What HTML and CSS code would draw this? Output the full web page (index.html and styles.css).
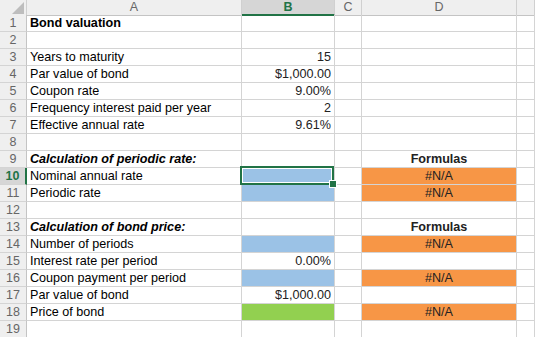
FILE: index.html
```html
<!DOCTYPE html>
<html>

	<head>
		<meta charset="UTF-8">
		<title>Bond valuation</title>
		<link rel="stylesheet" href="styles.css">
	</head>

	<body>
		<div class="sheet">
			<div class="row head">
				<div class="corner">
					<svg width="12" height="12" viewBox="0 0 12 12"><polygon points="12,0 12,12 0,12" fill="#bdbdbd"/></svg>
				</div>
				<div class="col">A</div>
				<div class="col sel">B</div>
				<div class="col">C</div>
				<div class="col">D</div>
				<div class="col"></div>
			</div>
			<div class="row">
				<div class="num">1</div>
				<div class="cell bold">Bond valuation</div>
				<div class="cell"></div><div class="cell"></div><div class="cell"></div><div class="cell"></div>
			</div>
			<div class="row">
				<div class="num">2</div>
				<div class="cell"></div><div class="cell"></div><div class="cell"></div><div class="cell"></div><div class="cell"></div>
			</div>
			<div class="row">
				<div class="num">3</div>
				<div class="cell">Years to maturity</div>
				<div class="cell val">15</div>
				<div class="cell"></div><div class="cell"></div><div class="cell"></div>
			</div>
			<div class="row">
				<div class="num">4</div>
				<div class="cell">Par value of bond</div>
				<div class="cell val">$1,000.00</div>
				<div class="cell"></div><div class="cell"></div><div class="cell"></div>
			</div>
			<div class="row">
				<div class="num">5</div>
				<div class="cell">Coupon rate</div>
				<div class="cell val">9.00%</div>
				<div class="cell"></div><div class="cell"></div><div class="cell"></div>
			</div>
			<div class="row">
				<div class="num">6</div>
				<div class="cell">Frequency interest paid per year</div>
				<div class="cell val">2</div>
				<div class="cell"></div><div class="cell"></div><div class="cell"></div>
			</div>
			<div class="row">
				<div class="num">7</div>
				<div class="cell">Effective annual rate</div>
				<div class="cell val">9.61%</div>
				<div class="cell"></div><div class="cell"></div><div class="cell"></div>
			</div>
			<div class="row">
				<div class="num">8</div>
				<div class="cell"></div><div class="cell"></div><div class="cell"></div><div class="cell"></div><div class="cell"></div>
			</div>
			<div class="row">
				<div class="num">9</div>
				<div class="cell bold ital">Calculation of periodic rate:</div>
				<div class="cell"></div>
				<div class="cell"></div>
				<div class="cell mid bold">Formulas</div>
				<div class="cell"></div>
			</div>
			<div class="row">
				<div class="num on">10</div>
				<div class="cell">Nominal annual rate</div>
				<div class="cell blue active"></div>
				<div class="cell"></div>
				<div class="cell mid orange">#N/A</div>
				<div class="cell"></div>
			</div>
			<div class="row">
				<div class="num">11</div>
				<div class="cell">Periodic rate</div>
				<div class="cell blue"></div>
				<div class="cell"></div>
				<div class="cell mid orange">#N/A</div>
				<div class="cell"></div>
			</div>
			<div class="row">
				<div class="num">12</div>
				<div class="cell"></div><div class="cell"></div><div class="cell"></div><div class="cell"></div><div class="cell"></div>
			</div>
			<div class="row">
				<div class="num">13</div>
				<div class="cell bold ital">Calculation of bond price:</div>
				<div class="cell"></div>
				<div class="cell"></div>
				<div class="cell mid bold">Formulas</div>
				<div class="cell"></div>
			</div>
			<div class="row">
				<div class="num">14</div>
				<div class="cell">Number of periods</div>
				<div class="cell blue"></div>
				<div class="cell"></div>
				<div class="cell mid orange">#N/A</div>
				<div class="cell"></div>
			</div>
			<div class="row">
				<div class="num">15</div>
				<div class="cell">Interest rate per period</div>
				<div class="cell val">0.00%</div>
				<div class="cell"></div><div class="cell"></div><div class="cell"></div>
			</div>
			<div class="row">
				<div class="num">16</div>
				<div class="cell">Coupon payment per period</div>
				<div class="cell blue"></div>
				<div class="cell"></div>
				<div class="cell mid orange">#N/A</div>
				<div class="cell"></div>
			</div>
			<div class="row">
				<div class="num">17</div>
				<div class="cell">Par value of bond</div>
				<div class="cell val">$1,000.00</div>
				<div class="cell"></div><div class="cell"></div><div class="cell"></div>
			</div>
			<div class="row">
				<div class="num">18</div>
				<div class="cell">Price of bond</div>
				<div class="cell green"></div>
				<div class="cell"></div>
				<div class="cell mid orange">#N/A</div>
				<div class="cell"></div>
			</div>
			<div class="row">
				<div class="num">19</div>
				<div class="cell"></div><div class="cell"></div><div class="cell"></div><div class="cell"></div><div class="cell"></div>
			</div>
		</div>
	</body>

</html>
```

FILE: styles.css
```css
* {
	margin: 0;
	padding: 0;
	box-sizing: border-box;
}

body {
	background: #fff;
	font-family: "Liberation Sans", Arial, sans-serif;
	font-size: 12.6px;
	color: #000;
	overflow: hidden;
}

.sheet {
	width: 535px;
}

.row {
	display: grid;
	grid-template-columns: 27px 215px 93px 27px 155px 18px;
	height: 17px;
}

.row.head {
	height: 15px;
}

.corner,
.col {
	background: #efefef;
	border-right: 1px solid #d0d0d0;
	border-bottom: 1px solid #c4c4c4;
}

.corner {
	display: flex;
	justify-content: flex-end;
	align-items: flex-end;
	padding: 0 2px 1px 0;
}

.col {
	color: #666;
	font-size: 12.5px;
	line-height: 14px;
	text-align: center;
}

.col.sel {
	background: #d6d6d6;
	color: #217346;
	font-weight: bold;
	border-bottom: 2px solid #217346;
}

.num {
	background: #efefef;
	color: #666;
	font-size: 12.5px;
	line-height: 16px;
	text-align: center;
	border-right: 1px solid #c4c4c4;
	border-bottom: 1px solid #d4d4d4;
}

.num.on {
	background: #d6d6d6;
	color: #217346;
	font-weight: bold;
	border-right: 2px solid #217346;
}

.cell {
	position: relative;
	padding: 1px 3px 0;
	line-height: 15px;
	white-space: nowrap;
	border-right: 1px solid #d4d4d4;
	border-bottom: 1px solid #d4d4d4;
}

.bold {
	font-weight: bold;
}

.ital {
	font-style: italic;
}

.val {
	text-align: right;
	color: #222;
}

.mid {
	text-align: center;
	color: #222;
}

.blue {
	background: #9bc2e6;
}

.orange {
	background: #f79646;
}

.green {
	background: #92d050;
}

/* selected cell frame and fill handle */
.active::before {
	content: "";
	position: absolute;
	left: -2px;
	top: -2px;
	right: 0;
	bottom: -1px;
	border: 2px solid #217346;
	box-shadow: inset 0 0 0 1px #fff;
	z-index: 2;
}

.active::after {
	content: "";
	position: absolute;
	right: -3px;
	bottom: -4px;
	width: 6px;
	height: 6px;
	background: #217346;
	border: 1px solid #fff;
	z-index: 3;
}
```
